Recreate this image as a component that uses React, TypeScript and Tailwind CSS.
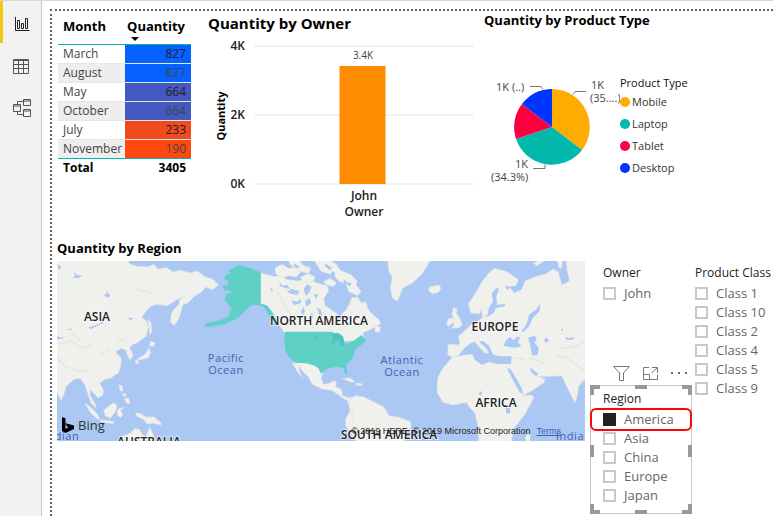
import React, { useState } from 'react';

const months = [
  { name: 'March', qty: 827, cell: 'bg-[#0561ff]' },
  { name: 'August', qty: 827, cell: 'bg-[#0561ff]' },
  { name: 'May', qty: 664, cell: 'bg-[#4459c0]' },
  { name: 'October', qty: 664, cell: 'bg-[#4459c0]' },
  { name: 'July', qty: 233, cell: 'bg-[#f04a1f]' },
  { name: 'November', qty: 190, cell: 'bg-[#ff480e]' },
];

const productTypes = [
  { name: 'Mobile', dot: 'bg-[#ffab00]' },
  { name: 'Laptop', dot: 'bg-[#01b8aa]' },
  { name: 'Tablet', dot: 'bg-[#fd0040]' },
  { name: 'Desktop', dot: 'bg-[#0035ff]' },
];

const NavRail: React.FC = () => (
  <nav className="w-[42px] shrink-0 bg-[#f2f2f2] border-r border-[#c8c8c8] flex flex-col">
    <button aria-label="Report" className="h-[42px] border-l-3 border-[#f2c811] pl-3 pt-1 flex items-center">
      <svg width="15" height="15" viewBox="0 0 15 15" fill="none" stroke="#222">
        <path d="M.5 0v13.500H14.500M2.500 3.500h2v8h-2zM6.500 6.500h2v5h-2zM10.500 1.500h2v10h-2z" />
      </svg>
    </button>
    <button aria-label="Data" className="h-[46px] pl-[13px] flex items-center">
      <svg width="16" height="15" viewBox="0 0 16 15" fill="none" stroke="#555">
        <path d="M.5 .5h15v14H.5zM.5 1.5h15M.5 5.5h15M.5 9.5h15M5.5 1.5v13M10.5 1.5v13" />
      </svg>
    </button>
    <button aria-label="Model" className="h-[38px] pl-[13px] flex items-center">
      <svg width="18" height="18" viewBox="0 0 18 18" fill="none" stroke="#555">
        <path d="M.5 5.5h7v7h-7zM.5 7h7M10.500 .5h7v6h-7zM10.500 2h7M10.500 10.500h7v7h-7zM10.500 12h7M4.500 5v-2.500h6M4.500 13v2.500h6" />
      </svg>
    </button>
  </nav>
);

const MonthTable: React.FC = () => (
  <table className="w-[133px] shrink-0 self-start border-collapse text-xs text-[#444]">
    <thead>
      <tr className="h-[33px] border-b border-[#01b8aa] text-[13px] leading-5 text-black align-top">
        <th className="w-[67px] pl-[5px] pt-[5px] text-left font-bold">Month</th>
        <th className="relative pr-[6px] pt-[5px] text-right font-bold">
          Quantity
          <span className="absolute left-[6px] bottom-[3px] border-x-4 border-t-4 border-x-transparent border-t-black" />
        </th>
      </tr>
    </thead>
    <tbody>
      {months.map((m, i) => (
        <tr key={m.name} className="h-[19px] border-b border-[#e6e6e6] last:border-[#01b8aa]">
          <td className={i % 2 ? 'pl-[5px] leading-[18px] bg-[#eee]' : 'pl-[5px] leading-[18px]'}>{m.name}</td>
          <td className={`${m.cell} pr-[5px] text-right leading-[18px] ${i % 2 ? 'text-[#444]' : 'text-[#222]'}`}>{m.qty}</td>
        </tr>
      ))}
    </tbody>
    <tfoot>
      <tr className="h-[20px] font-bold text-black">
        <td className="pl-[5px]">Total</td>
        <td className="pr-[5px] text-right">3405</td>
      </tr>
    </tfoot>
  </table>
);

const OwnerChart: React.FC = () => (
  <section className="w-[270px] shrink-0">
    <h2 className="pl-[3px] text-[15px] leading-6 font-bold">Quantity by Owner</h2>
    <svg className="block w-full" viewBox="0 0 270 190" fontSize="12" fontWeight="600" fill="#222">
      <path d="M49 11h220M49 80h220M49 149h220" stroke="#f2f2f2" strokeWidth="2" />
      <rect x="134.500" y="31" width="46" height="118" fill="#ff8c00" />
      <text x="40" y="15" textAnchor="end">4K</text>
      <text x="40" y="84" textAnchor="end">2K</text>
      <text x="40" y="153" textAnchor="end">0K</text>
      <text x="158" y="24" textAnchor="middle" fontSize="10" fontWeight="400" fill="#444">3.4K</text>
      <text x="159" y="165" textAnchor="middle">John</text>
      <text x="159" y="181" textAnchor="middle">Owner</text>
      <text x="0" y="0" transform="translate(20 81) rotate(-90)" textAnchor="middle" fontSize="11" fontWeight="700" fill="#000">Quantity</text>
    </svg>
  </section>
);

const TypeChart: React.FC = () => (
  <section className="flex-1 min-w-0">
    <h2 className="text-[13px] leading-[18px] font-bold whitespace-nowrap">Quantity by Product Type</h2>
    <div className="flex mt-[45px]">
      <svg className="shrink-0" width="136" height="112" viewBox="0 0 136 112" fontSize="11" fill="#444">
        <path d="M68 53V15A38 38 0 0 1 98 76z" fill="#ffab00" />
        <path d="M68 53L98 76A38 38 0 0 1 32 65z" fill="#01b8aa" />
        <path d="M68 53L32 65A38 38 0 0 1 38 30z" fill="#fd0040" />
        <path d="M68 53L38 30A38 38 0 0 1 68 15z" fill="#0035ff" />
        <path d="M46 12.500h11l2 3M102 17.500h-11l-2 3M49 94.500h12v-4" fill="none" stroke="#777" />
        <text x="12" y="17">1K (..)</text>
        <text x="107" y="15">1K</text>
        <text x="106" y="28">(35....)</text>
        <text x="31" y="94">1K</text>
        <text x="7" y="107">(34.3%)</text>
      </svg>
      <div className="text-[11px] text-[#333]">
        <div className="leading-[17px] text-[#111] whitespace-nowrap">Product Type</div>
        <ul>
          {productTypes.map(t => (
            <li key={t.name} className="flex items-center gap-[2px] h-[22px]">
              <span className={`size-[10px] rounded-full ${t.dot}`} />
              {t.name}
            </li>
          ))}
        </ul>
      </div>
    </div>
  </section>
);

const RegionMap: React.FC = () => (
  <div className="relative h-[180px] overflow-hidden bg-[#abc7f3]">
    <svg className="block w-full h-full" viewBox="0 0 528 180" preserveAspectRatio="xMidYMid slice">
      {/* land */}
      <g transform="scale(.33333)" fill="#f0f0ed" stroke="#e3e5e4" strokeWidth="2">
        <path d="M-4-4H212L217 8 238 16 274 17 290 10 302 24 328 20 348 33 370 28 398 36 420 30 444 47 470 56 484 72 466 86 446 78 434 92 412 106 392 126 378 130 372 150 368 168 352 194 341 184 342 160 350 146 366 130 368 116 382 106 356 118 345 126 330 134 300 130 280 136 266 152 254 168 268 180 274 198 268 225 242 245 228 250 218 260 228 284 220 296 211 284 208 268 194 262 178 270 178 276 192 290 192 312 184 336 162 350 142 356 128 366 139 386 138 402 124 411 110 396 100 386 98 402 112 424 118 442 102 426 92 396 84 372 70 352 50 355 26 378 22 396 12 418 0 394-4 390z" />
        <path d="M272 176l10 8 2 30-6 6-2-24zM282 240l12 6-4 10-12-2zM276 260l4 16-6 14-24 6-10-2 16-8 10-8zM236 298l8 0-2 10-8-4z" />
        <path d="M186 372l9 2 3 16-8 0zM196 398l12 2-6 8zM202 412l14 0 2 16-10-2zM84 428l12 6 24 24 8 16-8 0-20-20zM140 448l28-22 12 6-4 18-14 20-16-4zM180 450l8-8 14-2-12 8 8 14-8 8-8-8zM236 456l16 2 14 10 26 0 20 18 0 6-24-6-16 4-12-14-22-12zM188 541l10-16 22-8 12-14 16 2 6 14 12 10 12-30 18 38zM130 476l40 6 0 6-40-6z" />
        <path d="M610 35L654 47 672 42 690 56 724 60 750 54 780 66 810 74 816 94 802 110 802 132 824 148 840 158 844 180 856 172 856 158 868 146 878 128 884 110 902 108 912 126 926 122 932 142 944 158 968 178 970 188 940 206 918 214 920 240 780 240 682 214 658 178 646 158 630 136 610 128z" />
        <path d="M654 20l22-10 18 12 20-2 16 14-12 14-24-4-16 6-22-12zM692-4h34l10 16 26 10-8 16-32-10-18-14zM770-4h46l20 12 14 20 32 14 20 20-6 8 16 20-10 14-26-12-10-24-20-8-20-20-32-8zM730 48l26-10 18 10-6 14-28 0zM800 62l20-10 18 14-8 10-22-4z" />
        <path d="M706 306L746 304 774 314 798 332 792 350 798 370 814 368 830 360 838 362 836 378 852 384 856 404 874 410 884 408 876 420 858 412 846 402 824 388 796 384 766 370 756 350 740 334 724 314 728 334 736 350 724 336z" />
        <path d="M856 354l22-4 16 12-10 2-18-8zM898 366l16 2 0 6-16-2zM872 420L894 404 920 408 944 420 980 438 996 464 1030 470 1060 482 1062 498 1046 520 1042 544H900L884 520 866 494 866 474 880 448z" />
        <path d="M992-4L996 30 1006 50 1000 80 1006 110 1020 120 1028 106 1036 82 1066 66 1094 40 1108 18 1120-4zM1116 80l10-4 20-4 6 10-8 12-18 4-10-8zM954 194l16 4-2 16-14-2z" />
        <path d="M1190 140l10 4-2 14 10 12 8 22-12 8-20 2 8-12-6-10 4-10-6-12zM1174 174l12-4 2 16-14 10-6-6z" />
        <path d="M1588-4H1528L1530 24 1538 60 1514 72 1504 34 1488 24 1468 38 1434 48 1404 60 1394 86 1372 96 1354 76 1376 74 1384 56 1350 32 1312 22 1294 38 1274 64 1254 100 1234 128 1242 156 1268 158 1274 142 1276 170 1260 184 1246 188 1216 216 1204 226 1208 242 1206 252 1174 250 1172 280 1186 290 1174 302 1156 325 1142 352 1140 394 1158 424 1188 432 1228 424 1240 442 1254 456 1262 490 1266 544H1362L1372 500 1404 460 1430 410 1424 402 1396 404 1416 394 1460 366 1464 354 1440 346 1480 346 1514 344 1534 386 1554 426 1562 400 1564 376 1588 350zM1410 541l-6-10 8-12 8 4-2 18z" />
        <path d="M1500-4l6 24 8 2 2-26zM1430 6l20-10 10 6-22 12z" />
      </g>
      {/* inland seas, lakes and bays */}
      <g transform="scale(.33333)" fill="#abc7f3">
        <path d="M1180 292L1204 285 1220 264 1236 250 1252 242 1270 262 1286 278 1295 276 1288 262 1266 242 1278 240 1296 254 1308 280 1324 286 1364 286 1362 310 1318 308 1294 303 1276 312 1254 298 1246 280 1222 282z" />
        <path d="M1340 254l8-18 12-8 10 10 12-12 8 4-8 14 12 12-20 4-18-2zM1414 230l18-6 8 10-8 10 14 18-4 20-16 2-6-26zM1460 236l8-6 8 8-8 8zM1350 322l10 2 18 28 16 30 4 18-10-6-20-36zM1418 318l12 10 14 10-6 8-14-10z" />
        <path d="M1276 168l16-6 4-22 12-20-4-22 14-18 8 4-8 22 2 26 26-4-4 8-26 6-4 12-14 10zM1344 74l16 4-10 10zM1346 440l12 0 2 16-12 2zM1268 390l8 4-4 10-6-4zM1394 210l14-20 8-28 20-16 14-16-2 20-20 20-12 26-18 18z" />
        <path d="M812 94l34-2 30 14-8 18-10 4-4 24-10 2-24-22-20-18z" />
        <path d="M860 54l10 10 14 2-4 10-20-10zM824 30l10 6 0 12-12-4zM50 26l8 16 18 2-10 6-20 2 8-6zM150 90l4 8 6 4-6 8-10-4-4-4 8-2zM0 226l14 4 10-4-10 8-14 0zM94 200l32-12 16-10-4 8-36 18zM210 170l18 2-6 6zM1526 228l12 4 14-4-4 8-20 0zM0 10l14 8-8 10zM30 206l16-4-6 6zM1510 206l8-4-2 8z" />
        <path d="M666 60l10 14 16-2 6 12-12-2-16-6zM690 92l14-8 22 6-4 12-20-4zM740 84l10-14 14 8-8 18-10 8zM704 118l16 4 12-8 0 12-22 6zM744 120l14-8 4 14-14 12zM770 98l14 4-8 12zM640 80l10 8-8 2zM732 150l8-12 4 14-8 12zM780 140l12 6 4 20-10-4zM760 160l6-4 2 14-8-2zM864 176l8 4-2 14-6-4zM896 160l10 6-4 8zM910 190l12-4-4 8zM712 8l16 8-4 6-14-6zM806 8l18 12-4 8-16-12z" />
      </g>
      {/* mountain shading */}
      <g transform="scale(.33333)" fill="none" stroke="#e4e4e1" strokeWidth="4" strokeLinecap="round">
        <path d="M0 290L24 316 60 328 92 330M6 250L40 240 76 262 106 252M44 216L70 236M160 264L130 282M1420 290L1460 308M1500 284L1530 290 1560 312 1588 330M1510 264L1550 256 1588 242M1370 290L1400 296M240 84L290 100M180 244L210 230M884 448L888 480M660 92L700 160" />
      </g>
      {/* highlighted region */}
      <g transform="scale(.33333)" fill="#5fd0c6">
        <path d="M546 12L561 18 581 22 610 35V128L631 135 646 155 662 182 644 176 630 152 620 136 601 131 588 130 576 138 558 156 542 170 500 190 446 198 446 188 486 180 520 164 518 152 526 142 514 130 504 115 508 100 526 95 520 88 501 85 498 76 515 72 514 60 501 52 508 42 521 38 516 28 536 18z" stroke="#5fd0c6" strokeWidth="2" />
        <path d="M684 212H824L840 220 852 232 858 252 872 246 892 238 914 222 922 232 926 240 912 252 894 268 889 288 868 312 869 330 872 342 864 336 858 320 838 318 812 322 800 330 792 338 784 322 774 314 748 307 716 305 698 292 686 270 682 244z" />
        <path d="M546 366l6 2-3 4z" />
        <path d="M822 218l22-2 14 10 6 26-12 2-6-20-12 4-4 12-6-2 4-18zM770 222l10 4 0 8-8-2z" fill="#4cc5bd" />
      </g>
      {/* labels */}
      <g fontSize="12" fontWeight="600" fill="#222" textAnchor="middle" stroke="#fff" strokeWidth="2" strokeOpacity=".6" paintOrder="stroke">
        <text x="40" y="60">ASIA</text>
        <text x="262" y="64">NORTH AMERICA</text>
        <text x="438" y="70">EUROPE</text>
        <text x="439" y="146">AFRICA</text>
        <text x="92" y="185">AUSTRALIA</text>
        <text x="332" y="178">SOUTH AMERICA</text>
      </g>
      <g fontSize="11" fill="#4661ae" textAnchor="middle" className="tracking-wider">
        <text x="169" y="101">Pacific</text>
        <text x="169" y="113">Ocean</text>
        <text x="345" y="103">Atlantic</text>
        <text x="345" y="115">Ocean</text>
        <text x="10" y="179">dian</text>
        <text x="513" y="179">India</text>
      </g>
    </svg>
    <div className="absolute left-[5px] bottom-2 flex items-center gap-1 text-[13px] leading-4 text-[#333]">
      <svg width="12" height="16" viewBox="0 0 12 16" fill="#000">
        <path d="M0 0l3.500 1.300v10.800l3-2.100-1.700-.8-1.100-3L12 8.400v3.500L3.500 16 0 14z" />
      </svg>
      Bing
    </div>
    <div className="absolute right-6 bottom-[3px] flex gap-[6px] font-['Liberation_Sans',sans-serif] text-[9px] leading-[14px] text-[#222]">
      <span>© 2019 HERE, © 2019 Microsoft Corporation</span>
      <a href="#terms" className="text-[#3a5fb8] underline">Terms</a>
    </div>
  </div>
);

interface SlicerProps {
  title: string;
  items: string[];
  initial?: string;
  marked?: string;
}

const Slicer: React.FC<SlicerProps> = ({ title, items, initial, marked }) => {
  const [selected, setSelected] = useState<string[]>(initial ? [initial] : []);

  const toggle = (item: string) => {
    setSelected(prev => (prev.includes(item) ? prev.filter(s => s !== item) : [...prev, item]));
  };

  return (
    <fieldset className="min-w-0">
      <legend className="mb-px text-xs leading-5 text-[#222] whitespace-nowrap">{title}</legend>
      {items.map(item => (
        <label key={item} className="relative flex items-center gap-2 h-[19px] text-[13px] text-[#666] whitespace-nowrap">
          <input
            type="checkbox"
            checked={selected.includes(item)}
            onChange={() => toggle(item)}
            className="appearance-none size-[13px] shrink-0 border-2 border-[#c8c8c8] bg-white checked:bg-[#212121] checked:border-[#212121]"
          />
          {item}
          {item === marked && <span className="absolute -left-[13px] -right-px -inset-y-[2px] border-2 border-[#fb0505] rounded-md" />}
        </label>
      ))}
    </fieldset>
  );
};

const handles = [
  'left-0 top-0 w-[10px] h-1', 'left-0 top-0 w-1 h-[10px]',
  'right-0 top-0 w-[10px] h-1', 'right-0 top-0 w-1 h-[10px]',
  'left-0 bottom-0 w-[10px] h-1', 'left-0 bottom-0 w-1 h-[10px]',
  'right-0 bottom-0 w-[10px] h-1', 'right-0 bottom-0 w-1 h-[10px]',
  'left-[45px] top-0 w-3 h-1', 'left-[45px] bottom-0 w-3 h-1',
  'left-0 top-[60px] w-1 h-3', 'right-0 top-[60px] w-1 h-3',
];

const App: React.FC = () => {
  return (
    <div className="min-h-screen flex bg-white text-black border-t border-[#d8d8d8] font-['Open_Sans','Noto_Sans',sans-serif] overflow-hidden">
      <NavRail />
      <main className="flex-1 min-w-0 mt-2 ml-2 border-l-2 border-t-2 border-dotted border-[#606060]">
        <div className="flex pl-[6px]">
          <MonthTable />
          <div className="ml-[14px]">
            <OwnerChart />
          </div>
          <div className="ml-[9px] flex-1 min-w-0">
            <TypeChart />
          </div>
        </div>

        <div className="flex mt-[13px] pl-[5px]">
          <section className="flex-1 min-w-0">
            <h2 className="mb-[3px] text-[13px] leading-5 font-bold">Quantity by Region</h2>
            <RegionMap />
          </section>

          <div className="w-[102px] shrink-0 ml-[5px] pt-[25px]">
            <div className="pl-[13px]">
              <Slicer title="Owner" items={['John']} />
            </div>
            <div className="mt-[60px] h-[20px] flex items-center justify-end gap-[13px] pr-[5px]">
              <button aria-label="Filters">
                <svg width="17" height="16" viewBox="0 0 17 16" fill="none" stroke="#777">
                  <path d="M.7 1.500h15.600L10.500 8v7.500H6.500V8z" />
                </svg>
              </button>
              <button aria-label="Focus mode">
                <svg width="15" height="13" viewBox="0 0 15 13" fill="none" stroke="#777">
                  <path d="M6 .5H.5v12h14V8M.5 7.500h6v5M9 .5h5.500V6M14.500.5L8.500 6" />
                </svg>
              </button>
              <button aria-label="More options">
                <svg width="16" height="4" viewBox="0 0 16 4" fill="#666">
                  <path d="M0 1h2v2H0zM7 1h2v2H7zM14 1h2v2h-2z" />
                </svg>
              </button>
            </div>
            <div className="relative mt-[2px] border border-[#c8c8c8] pl-3 pt-[3px] pb-2">
              {handles.map(h => (
                <span key={h} className={`absolute -m-px bg-[#999] ${h}`} />
              ))}
              <Slicer title="Region" items={['America', 'Asia', 'China', 'Europe', 'Japan']} initial="America" marked="America" />
            </div>
          </div>

          <div className="w-[78px] shrink-0 ml-[3px] pt-[25px]">
            <Slicer title="Product Class" items={['Class 1', 'Class 10', 'Class 2', 'Class 4', 'Class 5', 'Class 9']} />
          </div>
        </div>
      </main>
    </div>
  );
};

export default App;
